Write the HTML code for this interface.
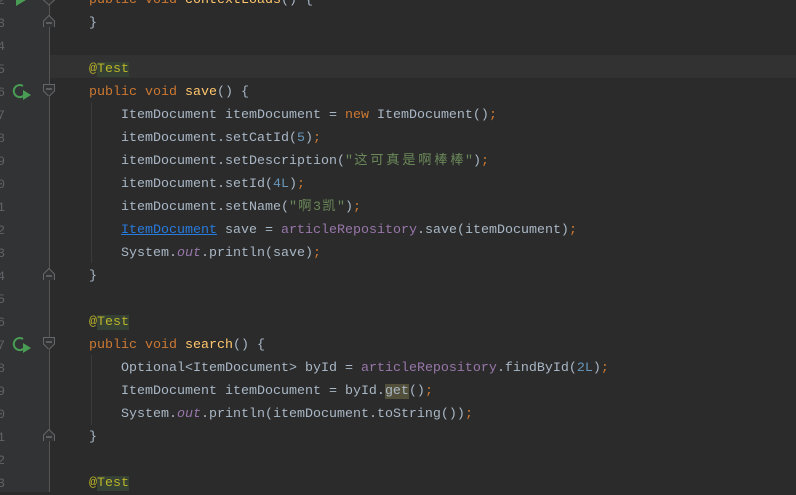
<!DOCTYPE html>
<html><head><meta charset="utf-8">
<style>
html,body{margin:0;padding:0;}
body{width:796px;height:492px;overflow:hidden;background:#2b2b2b;position:relative;font-family:"Liberation Mono","Noto Sans CJK SC",monospace;font-size:13.33px;color:#a9b7c6;}
.gut{position:absolute;left:0;top:0;width:50px;height:492px;background:#313335;}
.fl{position:absolute;left:49px;top:0;width:1px;height:492px;background:#555;}
.cur{position:absolute;left:50px;width:746px;height:23px;background:#323232;top:55px;}
.ln{position:absolute;left:89px;height:23px;line-height:23px;white-space:pre;margin-top:3px;}
.num{position:absolute;left:-7px;width:12px;text-align:right;height:23px;line-height:23px;color:#606366;font-size:13px;margin-top:3px;}
.k{color:#cc7832}.m{color:#ffc66d}.s{color:#6a8759}.n{color:#6897bb}.a{color:#bbb529}.p{color:#9876aa}.i{color:#9876aa;font-style:italic}
.u{color:#287bde;text-decoration:underline}
.c{display:inline-block;width:16px;text-align:center}
.tb{background:#344134}.gb{background:#52503a}
.ig{position:absolute;left:91px;width:1px;background:#3b3b3b;}
.fm{position:absolute;left:43px;width:12px;height:12px;}
</style></head><body>
<div class="gut"></div>
<div class="fl"></div>
<div class="cur"></div>
<div class="ig" style="top:102px;height:161px"></div>
<div class="ig" style="top:355px;height:70px"></div>

<div class="num" style="top:-14px">2</div>
<div class="num" style="top:9px">3</div>
<div class="num" style="top:32px">4</div>
<div class="num" style="top:55px">5</div>
<div class="num" style="top:78px">6</div>
<div class="num" style="top:101px">7</div>
<div class="num" style="top:124px">8</div>
<div class="num" style="top:147px">9</div>
<div class="num" style="top:170px">0</div>
<div class="num" style="top:193px">1</div>
<div class="num" style="top:216px">2</div>
<div class="num" style="top:239px">3</div>
<div class="num" style="top:262px">4</div>
<div class="num" style="top:285px">5</div>
<div class="num" style="top:308px">6</div>
<div class="num" style="top:331px">7</div>
<div class="num" style="top:354px">8</div>
<div class="num" style="top:377px">9</div>
<div class="num" style="top:400px">0</div>
<div class="num" style="top:423px">1</div>
<div class="num" style="top:446px">2</div>
<div class="num" style="top:469px">3</div>

<svg style="position:absolute;left:14px;top:-6px" width="14" height="12"><polygon points="2,0 12,6 2,12" fill="#499c54"/></svg>
<svg style="position:absolute;left:12px;top:83px" width="20" height="18"><path d="M11,3 A6,6 0 1 0 13,11" fill="none" stroke="#499c54" stroke-width="2"/><polygon points="11,7 19,12 11,17" fill="#499c54"/></svg>
<svg style="position:absolute;left:12px;top:336px" width="20" height="18"><path d="M11,3 A6,6 0 1 0 13,11" fill="none" stroke="#499c54" stroke-width="2"/><polygon points="11,7 19,12 11,17" fill="#499c54"/></svg>

<svg class="fm" style="top:-6px" width="12" height="12"><path d="M0.5,0.5 L11.5,0.5 L11.5,6 L6,11 L0.5,6Z" fill="#313335" stroke="#666"/></svg>
<svg class="fm" style="top:15px" width="12" height="13"><path d="M0.5,12.5 L11.5,12.5 L11.5,6 L6,0.5 L0.5,6Z" fill="#313335" stroke="#666"/><line x1="3" y1="8" x2="9" y2="8" stroke="#888"/></svg>
<svg class="fm" style="top:84px" width="12" height="13"><path d="M0.5,0.5 L11.5,0.5 L11.5,7 L6,12.5 L0.5,7Z" fill="#313335" stroke="#666"/><line x1="3" y1="5" x2="9" y2="5" stroke="#888"/></svg>
<svg class="fm" style="top:268px" width="12" height="13"><path d="M0.5,12.5 L11.5,12.5 L11.5,6 L6,0.5 L0.5,6Z" fill="#313335" stroke="#666"/><line x1="3" y1="8" x2="9" y2="8" stroke="#888"/></svg>
<svg class="fm" style="top:337px" width="12" height="13"><path d="M0.5,0.5 L11.5,0.5 L11.5,7 L6,12.5 L0.5,7Z" fill="#313335" stroke="#666"/><line x1="3" y1="5" x2="9" y2="5" stroke="#888"/></svg>
<svg class="fm" style="top:429px" width="12" height="13"><path d="M0.5,12.5 L11.5,12.5 L11.5,6 L6,0.5 L0.5,6Z" fill="#313335" stroke="#666"/><line x1="3" y1="8" x2="9" y2="8" stroke="#888"/></svg>

<div class="ln" style="top:-14px"><span class="k">public void </span><span class="m">contextLoads</span>() {</div>
<div class="ln" style="top:9px">}</div>
<div class="ln" style="top:55px"><span class="a">@<span class="tb">Test</span></span></div>
<div class="ln" style="top:78px"><span class="k">public void </span><span class="m">save</span>() {</div>
<div class="ln" style="top:101px">    ItemDocument itemDocument = <span class="k">new </span>ItemDocument()<span class="k">;</span></div>
<div class="ln" style="top:124px">    itemDocument.setCatId(<span class="n">5</span>)<span class="k">;</span></div>
<div class="ln" style="top:147px">    itemDocument.setDescription(<span class="s">"<span class="c">这</span><span class="c">可</span><span class="c">真</span><span class="c">是</span><span class="c">啊</span><span class="c">棒</span><span class="c">棒</span>"</span>)<span class="k">;</span></div>
<div class="ln" style="top:170px">    itemDocument.setId(<span class="n">4L</span>)<span class="k">;</span></div>
<div class="ln" style="top:193px">    itemDocument.setName(<span class="s">"<span class="c">啊</span>3<span class="c">凯</span>"</span>)<span class="k">;</span></div>
<div class="ln" style="top:216px">    <span class="u">ItemDocument</span> save = <span class="p">articleRepository</span>.save(itemDocument)<span class="k">;</span></div>
<div class="ln" style="top:239px">    System.<span class="i">out</span>.println(save)<span class="k">;</span></div>
<div class="ln" style="top:262px">}</div>
<div class="ln" style="top:308px"><span class="a">@<span class="tb">Test</span></span></div>
<div class="ln" style="top:331px"><span class="k">public void </span><span class="m">search</span>() {</div>
<div class="ln" style="top:354px">    Optional&lt;ItemDocument&gt; byId = <span class="p">articleRepository</span>.findById(<span class="n">2L</span>)<span class="k">;</span></div>
<div class="ln" style="top:377px">    ItemDocument itemDocument = byId.<span class="gb">get</span>()<span class="k">;</span></div>
<div class="ln" style="top:400px">    System.<span class="i">out</span>.println(itemDocument.toString())<span class="k">;</span></div>
<div class="ln" style="top:423px">}</div>
<div class="ln" style="top:469px"><span class="a">@<span class="tb">Test</span></span></div>
</body></html>
